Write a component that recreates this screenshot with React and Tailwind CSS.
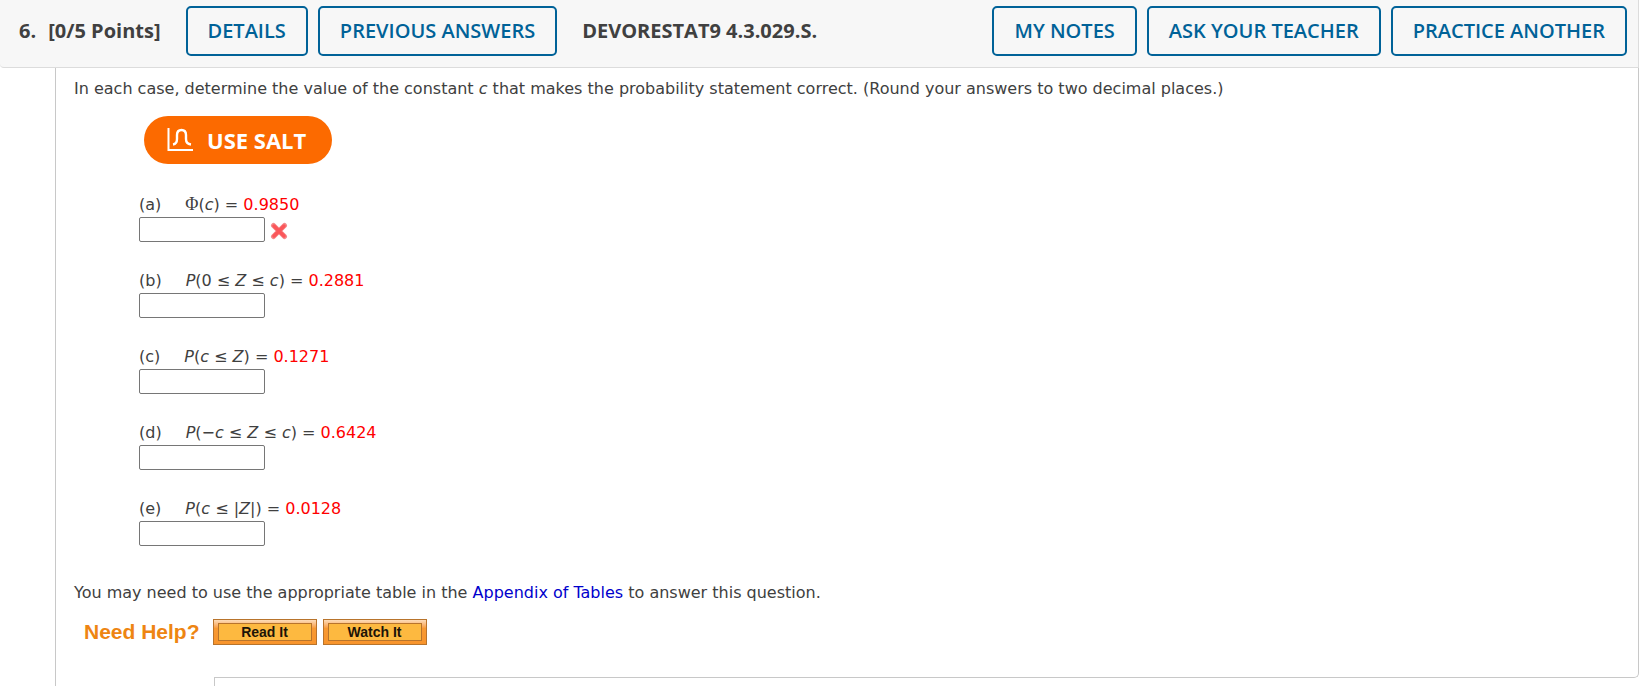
import React from 'react';

const parts = [
  { id: 'a', value: '0.9850', wrong: true, expr: <><span className="font-['Liberation_Serif',serif] text-[18px]">Φ</span>(<i>c</i>)</> },
  { id: 'b', value: '0.2881', expr: <><i>P</i>(0 ≤ <i>Z</i> ≤ <i>c</i>)</> },
  { id: 'c', value: '0.1271', expr: <><i>P</i>(<i>c</i> ≤ <i>Z</i>)</> },
  { id: 'd', value: '0.6424', expr: <><i>P</i>(−<i>c</i> ≤ <i>Z</i> ≤ <i>c</i>)</> },
  { id: 'e', value: '0.0128', expr: <><i>P</i>(<i>c</i> ≤ |<i>Z</i>|)</> },
];

const HeaderButton = ({ children }) => (
  <button className="h-[50px] px-5 rounded-[5px] border-2 border-[#006298] text-[#006298] font-semibold whitespace-nowrap">
    {children}
  </button>
);

const HelpButton = ({ children }) => (
  <button className="w-[104px] h-[26px] px-1 py-[3px] border border-[#b8742c] bg-linear-to-b from-[#fcdcb8] via-[#f89a34] via-35% to-[#f8942c]">
    <span className="flex items-center justify-center h-full border border-[#b8742c] bg-[#fdb940] text-[14px] font-bold text-[#1c1408]">
      {children}
    </span>
  </button>
);

const SaltIcon = () => (
  <svg width="26" height="24" viewBox="0 0 26 24" fill="none" stroke="white" strokeWidth="2" aria-hidden="true">
    <path d="M1.5 0V22H26" />
    <path d="M6 16.500C9 16 10 14 10 11V7C10 3.500 11.500 2 14.500 2S19 3.500 19 7V11C19 14 20 16 24 16.500" strokeWidth="2.400" />
  </svg>
);

const WrongMark = () => (
  <svg width="18" height="18" viewBox="0 0 18 18" className="mt-[2px]" role="img" aria-label="Incorrect">
    <path d="M3.500 3.500L14.500 14.500M14.500 3.500L3.500 14.500" stroke="#f4898b" strokeWidth="5" strokeLinecap="round" />
    <path d="M4 4L14 14M14 4L4 14" stroke="#fb5659" strokeWidth="3.500" strokeLinecap="round" />
  </svg>
);

const App = () => {
  return (
    <div className="min-h-screen flex flex-col pr-[2px] bg-white text-[#404040] font-['Verdana','DejaVu_Sans',sans-serif] text-base">
      <header className="flex items-center justify-between h-[68px] pt-[6px] pb-[11px] pl-[19px] pr-[11px] rounded-bl-[4px] border-b border-r border-[#dcdcdc] bg-[#f7f7f7] font-['Open_Sans',sans-serif] text-[20px]">
        <div className="flex items-center gap-[10px]">
          <h2 className="flex gap-3 mr-[15px] font-bold whitespace-nowrap">
            <span>6.</span>
            <span>[0/5 Points]</span>
          </h2>
          <HeaderButton>DETAILS</HeaderButton>
          <HeaderButton>PREVIOUS ANSWERS</HeaderButton>
          <span className="ml-[15px] font-bold whitespace-nowrap">DEVORESTAT9 4.3.029.S.</span>
        </div>
        <div className="flex items-center gap-[10px]">
          <HeaderButton>MY NOTES</HeaderButton>
          <HeaderButton>ASK YOUR TEACHER</HeaderButton>
          <HeaderButton>PRACTICE ANOTHER</HeaderButton>
        </div>
      </header>

      <main className="flex flex-col flex-1 ml-[55px] border-l border-[#c8c8c8]">
        <div className="pt-[9px] pl-[18px] border-r border-[#c8c8c8]">
          <p className="leading-6">
            In each case, determine the value of the constant <i>c</i> that makes the probability statement correct.
            (Round your answers to two decimal places.)
          </p>

          <button className="flex items-center gap-[14px] h-12 mt-[15px] ml-[70px] pl-[23px] pr-[26px] rounded-full bg-[#fc6a00] text-white font-['Open_Sans',sans-serif] text-[22px] font-bold whitespace-nowrap">
            <SaltIcon />
            USE SALT
          </button>

          {/* Question parts */}
          <div className="flex flex-col gap-[27px] mt-[29px] ml-[65px]">
            {parts.map((part) => (
              <div key={part.id}>
                <label htmlFor={`part-${part.id}`} className="flex h-6 leading-[23px]">
                  <span className="mr-6">({part.id})</span>
                  <span className="whitespace-pre">
                    {part.expr} = <span className="text-[#ff0000]">{part.value}</span>
                  </span>
                </label>
                <div className="flex items-center gap-[5px]">
                  <input
                    id={`part-${part.id}`}
                    type="text"
                    className="w-[126px] h-[25px] px-1 rounded-[2px] border border-[#767676] bg-white"
                  />
                  {part.wrong && <WrongMark />}
                </div>
              </div>
            ))}
          </div>

          <p className="mt-[35px] leading-6">
            You may need to use the appropriate table in the <a href="#tables" className="text-[#0000cc]">Appendix of Tables</a> to answer this question.
          </p>

          <div className="flex items-center gap-[6px] mt-[14px] ml-[10px] pb-[23px] font-['Liberation_Sans',sans-serif]">
            <span className="mr-[7px] text-[21px] leading-[26px] font-bold text-[#ee8512]">Need Help?</span>
            <HelpButton>Read It</HelpButton>
            <HelpButton>Watch It</HelpButton>
          </div>
        </div>

        <div className="h-[10px] ml-[158px] rounded-br-[5px] border-b border-r border-[#c8c8c8]" />
        <div className="flex-1 ml-[158px] border-l border-[#c8c8c8]" />
      </main>
    </div>
  );
};

export default App;
